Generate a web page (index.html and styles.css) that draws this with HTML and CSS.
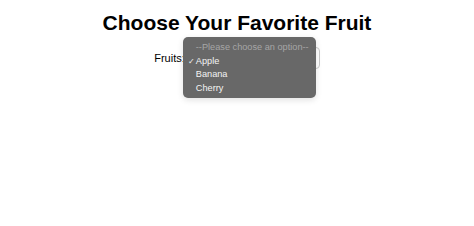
FILE: index.html
```html
<!DOCTYPE html>
<html lang="en">
<head>
    <meta charset="UTF-8">
    <title>Choose Your Favorite Fruit</title>
    <link rel="stylesheet" href="styles.css">
</head>
<body>
    <h1>Choose Your Favorite Fruit</h1>

    <div class="field">
        <label class="field-label">Fruits:</label>
        <div class="select-wrap">
            <div class="select-box"></div>

            <!-- open dropdown menu -->
            <div class="menu">
                <div class="menu-item disabled">--Please choose an option--</div>
                <div class="menu-item checked">Apple</div>
                <div class="menu-item">Banana</div>
                <div class="menu-item">Cherry</div>
            </div>
        </div>
    </div>
</body>
</html>
```

FILE: styles.css
```css
body {
    font-family: "Liberation Sans", Arial, sans-serif;
    background-color: #ffffff;
    color: #000000;
    margin: 0;
    padding: 0;
    min-height: 226px;
    display: flex;
    flex-direction: column;
    align-items: center;
}

h1 {
    font-size: 21px;
    line-height: 24px;
    font-weight: bold;
    margin: 11px 0 12px;
    text-align: center;
}

.field {
    display: flex;
    align-items: center;
    gap: 3px;
    font-size: 11px;
}

.field-label {
    line-height: 13px;
}

.select-wrap {
    position: relative;
}

.select-box {
    width: 130px;
    height: 20px;
    border: 1px solid #c8c8c8;
    border-radius: 4px;
    background-color: #ffffff;
}

.menu {
    position: absolute;
    left: -5px;
    top: -10px;
    width: 133px;
    padding: 4px 0 3px;
    background-color: #686868;
    border-radius: 5px;
    box-shadow: 0 2px 6px rgba(0, 0, 0, 0.12);
    color: #f4f4f4;
}

.menu-item {
    position: relative;
    height: 13.5px;
    line-height: 13.5px;
    padding-left: 13px;
    font-size: 9.2px;
    white-space: nowrap;
}

.menu-item.disabled {
    color: #a6a6a6;
}

.menu-item.checked::before {
    content: "\2713";
    position: absolute;
    left: 5px;
    font-size: 8px;
}
```
